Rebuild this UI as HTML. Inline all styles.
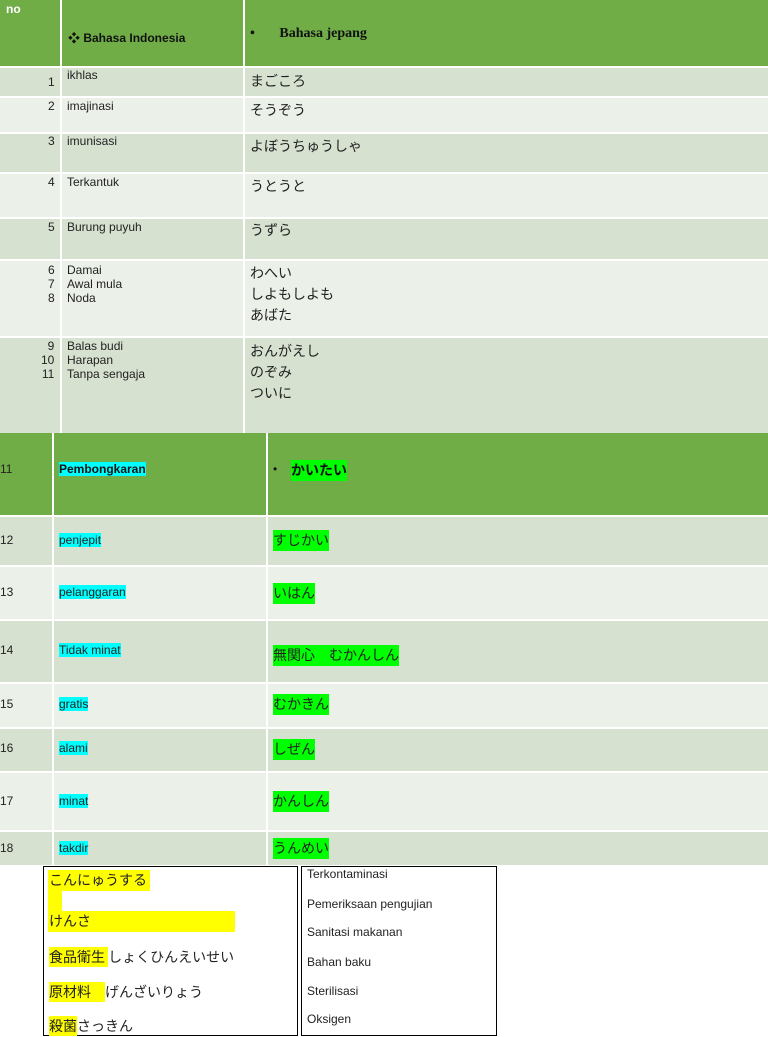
<!DOCTYPE html>
<html><head><meta charset="utf-8"><style>
body{margin:0;width:768px;height:1024px;overflow:hidden;background:#fff;position:relative;font-family:"Liberation Sans","Noto Sans CJK JP",sans-serif;}
.c{position:absolute;box-sizing:border-box;}
.t{position:absolute;font-size:12px;color:#222;white-space:nowrap;line-height:14px;}
.j{position:absolute;font-size:14px;color:#222;white-space:nowrap;font-family:"Noto Sans CJK JP",sans-serif;line-height:21px;}
.d{background:#d6e1d0}.l{background:#ebf0e8}.g{background:#70ad47}
.cy{background:#00ffff}.gr{background:#00ff00}.y{background:#ffff00}
</style></head><body>
<!-- table 1 -->
<div class="c g" style="left:0;top:0;width:60px;height:66px"></div>
<div class="c g" style="left:62px;top:0;width:181px;height:66px"></div>
<div class="c g" style="left:245px;top:0;width:523px;height:66px"></div>
<div class="t" style="left:6px;top:2px;color:#fff;font-weight:bold">no</div>
<div class="t" style="left:68px;top:31px;font-weight:bold;color:#111">❖ Bahasa Indonesia</div>
<div class="t" style="left:250px;top:27px;font-weight:bold;color:#111;font-family:'Liberation Serif',serif;font-size:14px">•&nbsp;&nbsp;&nbsp;&nbsp;&nbsp;&nbsp;&nbsp;Bahasa jepang</div>

<div class="c d" style="left:0;top:68px;width:60px;height:28px"></div><div class="c d" style="left:62px;top:68px;width:181px;height:28px"></div><div class="c d" style="left:245px;top:68px;width:523px;height:28px"></div>
<div class="c l" style="left:0;top:98px;width:60px;height:34px"></div><div class="c l" style="left:62px;top:98px;width:181px;height:34px"></div><div class="c l" style="left:245px;top:98px;width:523px;height:34px"></div>
<div class="c d" style="left:0;top:134px;width:60px;height:38px"></div><div class="c d" style="left:62px;top:134px;width:181px;height:38px"></div><div class="c d" style="left:245px;top:134px;width:523px;height:38px"></div>
<div class="c l" style="left:0;top:174px;width:60px;height:43px"></div><div class="c l" style="left:62px;top:174px;width:181px;height:43px"></div><div class="c l" style="left:245px;top:174px;width:523px;height:43px"></div>
<div class="c d" style="left:0;top:219px;width:60px;height:40px"></div><div class="c d" style="left:62px;top:219px;width:181px;height:40px"></div><div class="c d" style="left:245px;top:219px;width:523px;height:40px"></div>
<div class="c l" style="left:0;top:261px;width:60px;height:75px"></div><div class="c l" style="left:62px;top:261px;width:181px;height:75px"></div><div class="c l" style="left:245px;top:261px;width:523px;height:75px"></div>
<div class="c d" style="left:0;top:338px;width:60px;height:95px"></div><div class="c d" style="left:62px;top:338px;width:181px;height:95px"></div><div class="c d" style="left:245px;top:338px;width:523px;height:95px"></div>

<div class="t" style="left:48px;top:75px">1</div><div class="t" style="left:67px;top:68px">ikhlas</div><div class="j" style="left:250px;top:71px">まごころ</div>
<div class="t" style="left:48px;top:99px">2</div><div class="t" style="left:67px;top:99px">imajinasi</div><div class="j" style="left:250px;top:100px">そうぞう</div>
<div class="t" style="left:48px;top:134px">3</div><div class="t" style="left:67px;top:134px">imunisasi</div><div class="j" style="left:250px;top:136px">よぼうちゅうしゃ</div>
<div class="t" style="left:48px;top:175px">4</div><div class="t" style="left:67px;top:175px">Terkantuk</div><div class="j" style="left:250px;top:176px">うとうと</div>
<div class="t" style="left:48px;top:220px">5</div><div class="t" style="left:67px;top:220px">Burung puyuh</div><div class="j" style="left:250px;top:220px">うずら</div>
<div class="t" style="left:48px;top:263px;line-height:14px">6<br>7<br>8</div><div class="t" style="left:67px;top:263px">Damai<br>Awal mula<br>Noda</div><div class="j" style="left:250px;top:263px">わへい<br>しよもしよも<br>あばた</div>
<div class="t" style="left:41px;top:339px;text-align:right">&nbsp;9<br>10<br>11</div><div class="t" style="left:67px;top:339px">Balas budi<br>Harapan<br>Tanpa sengaja</div><div class="j" style="left:250px;top:341px">おんがえし<br>のぞみ<br>ついに</div>

<!-- table 2 -->
<div class="c g" style="left:0;top:433px;width:52px;height:82px"></div><div class="c g" style="left:54px;top:433px;width:212px;height:82px"></div><div class="c g" style="left:268px;top:433px;width:500px;height:82px"></div>
<div class="c d" style="left:0;top:517px;width:52px;height:48px"></div><div class="c d" style="left:54px;top:517px;width:212px;height:48px"></div><div class="c d" style="left:268px;top:517px;width:500px;height:48px"></div>
<div class="c l" style="left:0;top:567px;width:52px;height:52px"></div><div class="c l" style="left:54px;top:567px;width:212px;height:52px"></div><div class="c l" style="left:268px;top:567px;width:500px;height:52px"></div>
<div class="c d" style="left:0;top:621px;width:52px;height:61px"></div><div class="c d" style="left:54px;top:621px;width:212px;height:61px"></div><div class="c d" style="left:268px;top:621px;width:500px;height:61px"></div>
<div class="c l" style="left:0;top:684px;width:52px;height:43px"></div><div class="c l" style="left:54px;top:684px;width:212px;height:43px"></div><div class="c l" style="left:268px;top:684px;width:500px;height:43px"></div>
<div class="c d" style="left:0;top:729px;width:52px;height:42px"></div><div class="c d" style="left:54px;top:729px;width:212px;height:42px"></div><div class="c d" style="left:268px;top:729px;width:500px;height:42px"></div>
<div class="c l" style="left:0;top:773px;width:52px;height:57px"></div><div class="c l" style="left:54px;top:773px;width:212px;height:57px"></div><div class="c l" style="left:268px;top:773px;width:500px;height:57px"></div>
<div class="c d" style="left:0;top:832px;width:52px;height:33px"></div><div class="c d" style="left:54px;top:832px;width:212px;height:33px"></div><div class="c d" style="left:268px;top:832px;width:500px;height:33px"></div>

<div class="t" style="left:0;top:462px">11</div><div class="t cy" style="left:59px;top:462px;font-weight:bold;color:#111">Pembongkaran</div><div class="t" style="left:273px;top:462px;color:#111">•</div><div class="j gr" style="left:291px;top:460px;font-weight:bold;color:#111">かいたい</div>
<div class="t" style="left:0;top:533px">12</div><div class="t cy" style="left:59px;top:533px">penjepit</div><div class="j gr" style="left:273px;top:530px">すじかい</div>
<div class="t" style="left:0;top:585px">13</div><div class="t cy" style="left:59px;top:585px">pelanggaran</div><div class="j gr" style="left:273px;top:583px">いはん</div>
<div class="t" style="left:0;top:643px">14</div><div class="t cy" style="left:59px;top:643px">Tidak minat</div><div class="j gr" style="left:273px;top:645px">無関心　むかんしん</div>
<div class="t" style="left:0;top:697px">15</div><div class="t cy" style="left:59px;top:697px">gratis</div><div class="j gr" style="left:273px;top:694px">むかきん</div>
<div class="t" style="left:0;top:741px">16</div><div class="t cy" style="left:59px;top:741px">alami</div><div class="j gr" style="left:273px;top:739px">しぜん</div>
<div class="t" style="left:0;top:794px">17</div><div class="t cy" style="left:59px;top:794px">minat</div><div class="j gr" style="left:273px;top:791px">かんしん</div>
<div class="t" style="left:0;top:841px">18</div><div class="t cy" style="left:59px;top:841px">takdir</div><div class="j gr" style="left:273px;top:838px">うんめい</div>

<!-- bottom boxes -->
<div class="c" style="left:43px;top:866px;width:255px;height:170px;border:1px solid #000"></div>
<div class="c" style="left:301px;top:866px;width:196px;height:170px;border:1px solid #000"></div>
<div class="c y" style="left:48px;top:870px;width:102px;height:21px"></div>
<div class="c y" style="left:48px;top:890px;width:14px;height:21px"></div>
<div class="c y" style="left:48px;top:911px;width:187px;height:21px"></div>
<div class="j" style="left:49px;top:870px">こんにゅうする</div>
<div class="j" style="left:49px;top:911px">けんさ</div>
<div class="j" style="left:49px;top:947px"><span class="y">食品衛生 </span>しょくひんえいせい</div>
<div class="j" style="left:49px;top:982px"><span class="y">原材料　</span>げんざいりょう</div>
<div class="j" style="left:49px;top:1016px"><span class="y">殺菌</span>さっきん</div>
<div class="t" style="left:307px;top:867px">Terkontaminasi</div>
<div class="t" style="left:307px;top:897px">Pemeriksaan pengujian</div>
<div class="t" style="left:307px;top:925px">Sanitasi makanan</div>
<div class="t" style="left:307px;top:955px">Bahan baku</div>
<div class="t" style="left:307px;top:984px">Sterilisasi</div>
<div class="t" style="left:307px;top:1012px">Oksigen</div>
</body></html>
